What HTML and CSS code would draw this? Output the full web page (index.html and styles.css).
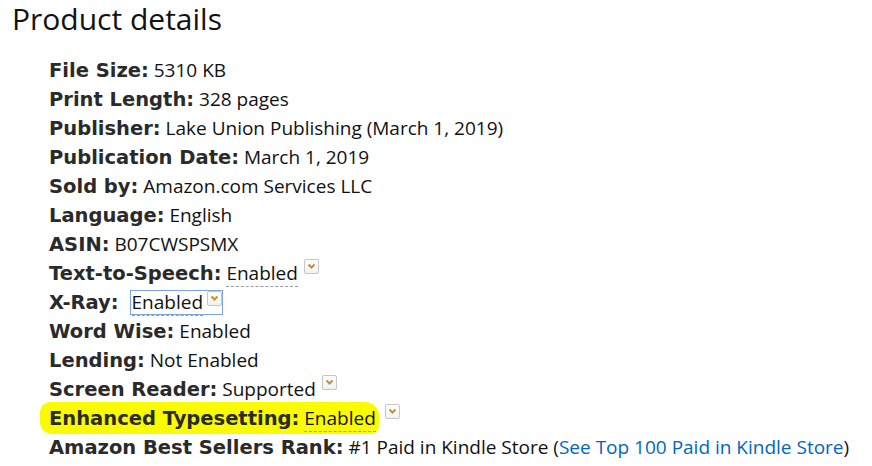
FILE: index.html
```
<!DOCTYPE html>
<html>
<head>
    <link rel="stylesheet" href="styles.css">
</head>
<body>
    <div class="details">
        <h2 class="details-title">Product details</h2>
        <ul class="details-list">
            <li><b>File Size:</b> 5310 KB</li>
            <li><b>Print Length:</b> 328 pages</li>
            <li><b>Publisher:</b> Lake Union Publishing (March 1, 2019)</li>
            <li><b>Publication Date:</b> March 1, 2019</li>
            <li><b>Sold by:</b> Amazon.com Services LLC</li>
            <li><b>Language:</b> English</li>
            <li><b>ASIN:</b> B07CWSPSMX</li>
            <li><b>Text-to-Speech:</b> <span class="popover">Enabled</span><span class="drop"><svg viewBox="0 0 13 13"><polyline points="3.5,4.5 6.5,7.5 9.5,4.5"/></svg></span></li>
            <li><b>X-Ray:</b> <span class="focused"><span class="popover">Enabled</span><span class="drop"><svg viewBox="0 0 13 13"><polyline points="3.5,4.5 6.5,7.5 9.5,4.5"/></svg></span></span></li>
            <li><b>Word Wise:</b> Enabled</li>
            <li><b>Lending:</b> Not Enabled</li>
            <li><b>Screen Reader:</b> <span class="popover">Supported</span><span class="drop"><svg viewBox="0 0 13 13"><polyline points="3.5,4.5 6.5,7.5 9.5,4.5"/></svg></span></li>
            <li><span class="marker"><b>Enhanced Typesetting:</b> <span class="popover">Enabled</span></span><span class="drop"><svg viewBox="0 0 13 13"><polyline points="3.5,4.5 6.5,7.5 9.5,4.5"/></svg></span></li>
            <li><b>Amazon Best Sellers Rank:</b> #1 Paid in Kindle Store (<a href="#">See Top 100 Paid in Kindle Store</a>)</li>
        </ul>
    </div>
</body>
</html>
```
FILE: styles.css
```
body {
    margin: 0;
    background: #fff;
    color: #111;
    font-family: 'Open Sans', 'Noto Sans', sans-serif;
}
.details {
    padding: 0 12px;
}
.details-title {
    font-size: 30px;
    font-weight: normal;
    margin: 0;
    line-height: 38px;
    color: #111;
}
.details-list {
    list-style: none;
    margin: 18px 0 0;
    padding: 0 0 0 37px;
    font-size: 19px;
    line-height: 29px;
}
.details-list li {
    white-space: nowrap;
}
.details-list b {
    font-family: 'DejaVu Sans', 'Verdana', sans-serif;
    font-size: 19.5px;
    line-height: 20px;
    color: #2a2a2a;
}
.popover {
    border-bottom: 1px dashed #9a9a9a;
    line-height: 20px;
}
.drop {
    display: inline-block;
    width: 13px;
    height: 13px;
    border: 1px solid #c6c6c6;
    border-radius: 2px;
    margin-left: 6px;
    vertical-align: 7px;
    background: linear-gradient(#fff, #f2f2f2);
    line-height: 0;
}
.drop svg {
    width: 13px;
    height: 13px;
    fill: none;
    stroke: #c4912f;
    stroke-width: 2;
}
.focused {
    display: inline-block;
    border: 1px solid #7aa5df;
    padding: 0 0 0 1px;
    margin-left: 6px;
    line-height: 23px;
}
.focused .drop {
    margin-left: 4px;
    vertical-align: 4px;
    margin-right: 0;
}
.marker {
    background: #fafa00;
    margin-left: -9px;
    padding: 3px 3px 3px 9px;
    border-radius: 10px 14px 8px 12px;
}
a {
    color: #0066c0;
    text-decoration: none;
}
```
